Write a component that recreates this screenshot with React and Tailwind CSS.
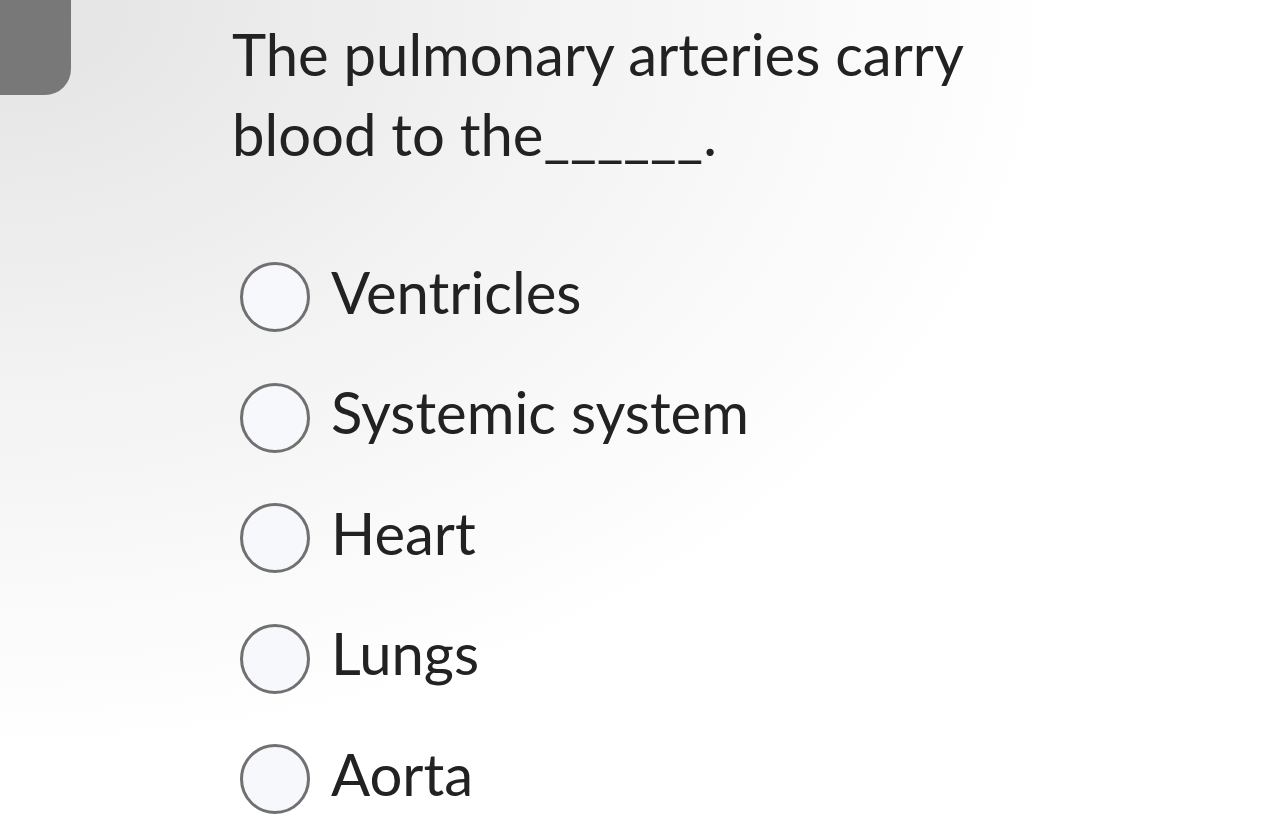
import React from 'react';

const OPTIONS = ['Ventricles', 'Systemic system', 'Heart', 'Lungs', 'Aorta'];

export default function App() {
  return (
    <div
      className="relative w-[1284px] h-[829px] overflow-hidden bg-[radial-gradient(ellipse_1150px_820px_at_0%_0%,#e3e3e3_0%,#f2f2f2_45%,#ffffff_92%)] text-[#222222]"
      style={{ fontFamily: 'Lato, "Open Sans", sans-serif' }}
    >
      {/* ─── Corner tab ─── */}
      <div className="absolute left-0 top-0 w-[71px] h-[95px] bg-[#787878] rounded-br-[26px]" />

      <div className="pl-[232px] pt-[14px]">
        <h1 className="text-[58px] leading-[80px] font-normal w-[800px]">
          The pulmonary arteries carry blood to the______.
        </h1>

        <div className="mt-[88px] flex flex-col gap-[50.5px] pl-[8px]">
          {OPTIONS.map((o) => (
            <label key={o} className="flex items-center gap-[21px] h-[70px]">
              <span className="w-[70px] h-[70px] rounded-full border-[3px] border-[#707070] bg-[#f7f8fc] shrink-0" />
              <span className="text-[58px] leading-none mb-[11px]">{o}</span>
            </label>
          ))}
        </div>
      </div>
    </div>
  );
}
